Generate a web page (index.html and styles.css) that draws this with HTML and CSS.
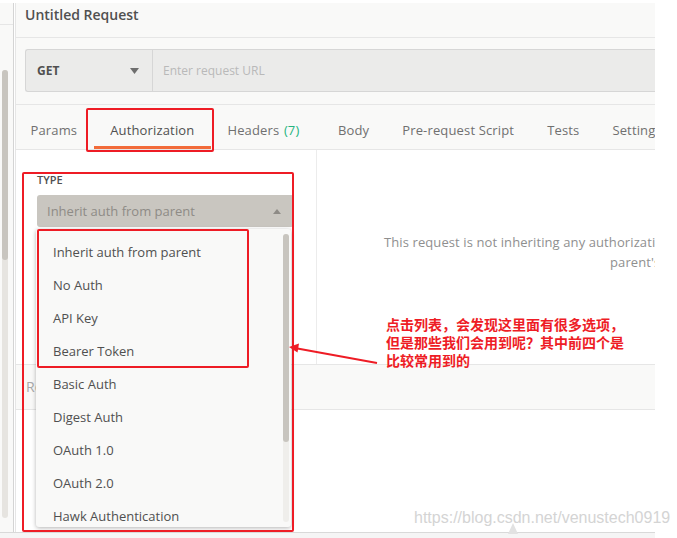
FILE: index.html
```html
<!DOCTYPE html>
<html lang="en">

<head>
  <meta charset="UTF-8" />
  <title>Untitled Request</title>
  <link rel="stylesheet" href="styles.css">
</head>

<body>
  <div class="shot">
    <div class="window">
      <div class="sidebar">
        <div class="sidebar-head"></div>
        <div class="sidebar-track">
          <div class="sidebar-thumb"></div>
        </div>
      </div>

      <div class="main">
        <div class="title-bar">Untitled Request</div>

        <div class="url-section">
          <div class="url-box">
            <div class="method">
              GET
              <svg class="caret" width="9" height="6" viewBox="0 0 9 6"><path d="M0 0h9L4.5 6z" fill="#6e6e6e"/></svg>
            </div>
            <div class="url-input">Enter request URL</div>
          </div>
        </div>

        <div class="tabs">
          <div class="tab">Params</div>
          <div class="tab active">Authorization</div>
          <div class="tab headers">Headers <span class="count">(7)</span></div>
          <div class="tab">Body</div>
          <div class="tab">Pre-request Script</div>
          <div class="tab">Tests</div>
          <div class="tab">Settings</div>
        </div>

        <div class="auth">
          <div class="auth-left">
            <div class="type-label">TYPE</div>
            <div class="type-select">
              Inherit auth from parent
              <svg class="caret-up" width="8" height="5" viewBox="0 0 8 5"><path d="M0 5h8L4 0z" fill="#8e8b86"/></svg>
            </div>

            <div class="dropdown">
              <div class="dropdown-list">
                <div class="dropdown-item">Inherit auth from parent</div>
                <div class="dropdown-item">No Auth</div>
                <div class="dropdown-item">API Key</div>
                <div class="dropdown-item">Bearer Token</div>
                <div class="dropdown-item">Basic Auth</div>
                <div class="dropdown-item">Digest Auth</div>
                <div class="dropdown-item">OAuth 1.0</div>
                <div class="dropdown-item">OAuth 2.0</div>
                <div class="dropdown-item">Hawk Authentication</div>
              </div>
              <div class="dropdown-track">
                <div class="dropdown-thumb"></div>
              </div>
            </div>
          </div>
          <div class="auth-right">
            <div class="info-line">This request is not inheriting any authorization helper at the moment.</div>
            <div class="info-line second">parent's authorization helper.</div>
          </div>
        </div>

        <div class="response-bar">Response</div>
        <div class="response-body"></div>
      </div>
    </div>
    <div class="footer"></div>

    <!-- annotations drawn on the screenshot -->
    <div class="mark mark-tab"></div>
    <div class="mark mark-type"></div>
    <div class="mark mark-items"></div>
    <svg class="arrow" width="677" height="538" viewBox="0 0 677 538">
      <line x1="377" y1="363" x2="296" y2="348.3" stroke="#ee1c25" stroke-width="2" />
      <path d="M289 347 L299 343.5 L297.5 352.5 Z" fill="#ee1c25" />
    </svg>
    <div class="note">
      点击列表，会发现这里面有很多选项，<br>
      但是那些我们会用到呢？其中前四个是<br>
      比较常用到的
    </div>
    <div class="watermark">https://blog.csdn.net/venustech0919</div>
    <svg class="wm-tri" width="12" height="12" viewBox="0 0 12 12"><path d="M6 1L11 12H1z" fill="#e2e2e2"/></svg>
  </div>
</body>

</html>
```

FILE: styles.css
```css
body {
  margin: 0;
  background-color: #ffffff;
  font-family: "Open Sans", "Noto Sans", sans-serif;
  color: #505050;
}

.shot {
  position: relative;
  width: 677px;
  height: 538px;
  overflow: hidden;
}

.window {
  display: flex;
  width: 655px;
  height: 529px;
  margin-top: 3px;
  border-bottom: 1px solid #d9d9d9;
}

.sidebar {
  width: 13px;
  flex-shrink: 0;
  background-color: #f9f9f8;
  border-right: 1px solid #d4d4d4;
}

.sidebar-head {
  height: 21px;
  border-bottom: 1px solid #e6e6e6;
}

.sidebar-track {
  width: 6px;
  height: 448px;
  margin: 45px 0 0 2px;
  border-radius: 3px;
  background-color: #e6e4e0;
}

.sidebar-thumb {
  height: 190px;
  border-radius: 3px;
  background-color: #c8c5bf;
}

.main {
  flex: 1;
  min-width: 0;
  display: flex;
  flex-direction: column;
  margin-left: 1px;
  border-left: 1px solid #e6e6e6;
  background-color: #f9f9f8;
  overflow: hidden;
}

.title-bar {
  height: 32px;
  padding: 2px 0 0 9px;
  border-bottom: 1px solid #e6e6e6;
  font-size: 14px;
  line-height: 20px;
  font-weight: 600;
  color: #505050;
}

.url-section {
  padding: 11px 0 12px 9px;
}

.url-box {
  display: flex;
  height: 41px;
  border: 1px solid #d6d6d6;
  border-right: none;
  border-radius: 3px 0 0 3px;
  background-color: #ebebea;
}

.method {
  display: flex;
  align-items: center;
  justify-content: space-between;
  width: 102px;
  padding: 0 13px 0 11px;
  border-right: 1px solid #d6d6d6;
  font-size: 12px;
  font-weight: 700;
  color: #505050;
}

.url-input {
  display: flex;
  align-items: center;
  padding-left: 10px;
  font-size: 12px;
  color: #b9b9b9;
}

.tabs {
  display: flex;
  height: 44px;
  margin-left: -2px;
  border-top: 1px solid #e6e6e6;
  border-bottom: 1px solid #e6e6e6;
  white-space: nowrap;
}

.tab {
  padding: 15px 16.5px 0;
  font-size: 13px;
  line-height: 20px;
  letter-spacing: 0.15px;
  color: #707070;
}

.tab.active {
  color: #505050;
  border-bottom: 3px solid #f26b3a;
  height: 26px;
}

.tab.headers {
  padding-right: 22px;
}

.count {
  margin-left: 1px;
  color: #26b47f;
}

.auth {
  display: flex;
  height: 214px;
  background-color: #ffffff;
}

.auth-left {
  position: relative;
  flex-shrink: 0;
  width: 279px;
  padding: 22px 0 0 21px;
  border-right: 1px solid #ececec;
}

.type-label {
  font-size: 11px;
  line-height: 15px;
  font-weight: 600;
  color: #505050;
}

.type-select {
  display: flex;
  align-items: center;
  justify-content: space-between;
  width: 234px;
  height: 32px;
  margin-top: 8px;
  padding: 0 13px 0 10px;
  border-radius: 3px;
  background-color: #c9c6c0;
  font-size: 13px;
  color: #8e8b86;
}

.dropdown {
  position: absolute;
  top: 79px;
  left: 20px;
  display: flex;
  width: 255px;
  height: 298px;
  border-radius: 3px;
  background-color: #f9f9f8;
  box-shadow: 0 1px 4px rgba(0, 0, 0, 0.3);
}

.dropdown-list {
  flex: 1;
  padding-top: 7px;
}

.dropdown-item {
  height: 33px;
  padding-left: 17px;
  font-size: 13px;
  line-height: 33px;
  color: #505050;
}

.dropdown-track {
  width: 6px;
  margin: 5px 2px 5px 0;
  border-radius: 3px;
  background-color: #efeeeb;
}

.dropdown-thumb {
  height: 208px;
  border-radius: 3px;
  background-color: #c8c5bf;
}

.auth-right {
  flex: 1;
  min-width: 0;
  overflow: hidden;
  padding: 82px 0 0 67px;
  white-space: nowrap;
  font-size: 13px;
  line-height: 20px;
  letter-spacing: 0.1px;
  color: #8f8f8f;
}

.info-line.second {
  padding-left: 226px;
}

.response-bar {
  height: 44px;
  padding-left: 10px;
  border-top: 1px solid #e6e6e6;
  border-bottom: 1px solid #e6e6e6;
  font-size: 14px;
  line-height: 44px;
  color: #a8a8a8;
}

.response-body {
  flex: 1;
  background-color: #ffffff;
}

.footer {
  width: 655px;
  height: 5px;
  background-color: #f5f5f5;
}

.mark {
  position: absolute;
  border: 2px solid #ee1c25;
  border-radius: 2px;
}

.mark-tab {
  left: 86px;
  top: 108px;
  width: 124px;
  height: 40px;
}

.mark-type {
  left: 22px;
  top: 172px;
  width: 268px;
  height: 356px;
}

.mark-items {
  left: 37px;
  top: 229px;
  width: 208px;
  height: 135px;
}

.arrow {
  position: absolute;
  left: 0;
  top: 0;
}

.note {
  position: absolute;
  left: 386px;
  top: 315px;
  font-family: "Noto Sans CJK SC", sans-serif;
  font-size: 14px;
  line-height: 18px;
  font-weight: 700;
  color: #ee1c25;
}

.watermark {
  position: absolute;
  left: 414px;
  top: 509px;
  font-family: "Liberation Sans", Arial, sans-serif;
  font-size: 16px;
  color: #d4d4d4;
}

.wm-tri {
  position: absolute;
  left: 507px;
  top: 522px;
}
```
